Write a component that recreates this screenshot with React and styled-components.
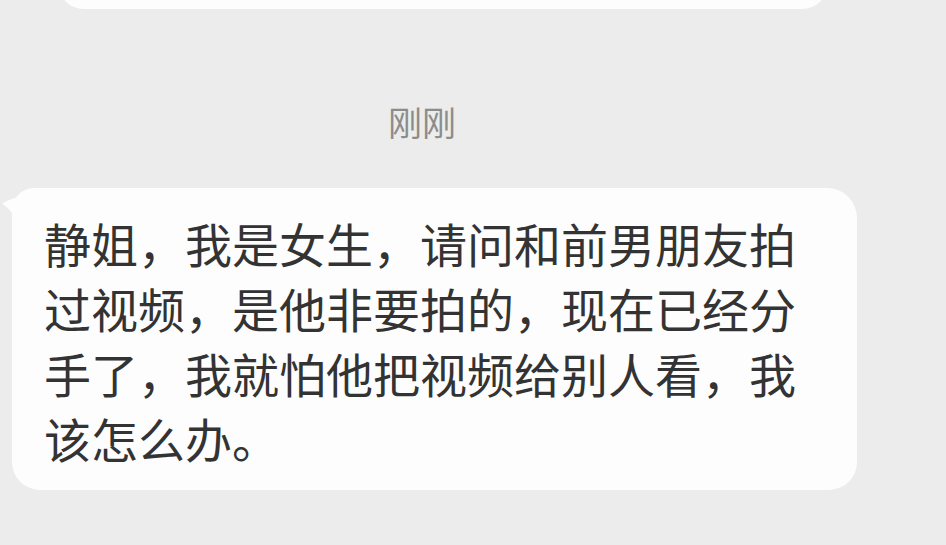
import styled, { createGlobalStyle } from "styled-components"

const GlobalStyle = createGlobalStyle`
  html, body {
    margin: 0;
    padding: 0;
    background: #ececec;
    overflow: hidden;
  }
  body {
    font-family: "Noto Sans CJK SC", "Noto Sans", sans-serif;
  }
`;

const Screen = styled.div`
  width: 946px;
  height: 545px;
  background: #ececec;
  overflow: hidden;
`;

const PrevBubble = styled.div`
  margin: -40px 0 0 58px;
  width: 770px;
  height: 49px;
  background: #fdfdfd;
  border-radius: 0 0 26px 26px;
`;

const Time = styled.div`
  width: 844px;
  margin-top: 93px;
  text-align: center;
  font-size: 34px;
  line-height: 40px;
  color: #8c8c8c;
`;

const Row = styled.div`
  padding: 46px 0 0 12px;
`;

const Bubble = styled.div`
  position: relative;
  width: 845px;
  box-sizing: border-box;
  padding: 22px 40px 20px 32px;
  background: #fdfdfd;
  border-radius: 22px 30px 28px 28px;
  font-size: 47px;
  line-height: 65px;
  color: #333333;
`;

const Tail = styled.svg`
  position: absolute;
  left: -11px;
  top: 10px;
`;

const App = () => {
  return (
    <Screen>
      <GlobalStyle />
      <PrevBubble />
      <Time>刚刚</Time>
      <Row>
        <Bubble>
          <Tail width="14" height="20" viewBox="0 0 14 20">
            <path d="M14 0 Q6 2 1 6 Q8 9 14 20 Z" fill="#fdfdfd" />
          </Tail>
          静姐，我是女生，请问和前男朋友拍过视频，是他非要拍的，现在已经分手了，我就怕他把视频给别人看，我该怎么办。
        </Bubble>
      </Row>
    </Screen>
  )
}

export default App;
